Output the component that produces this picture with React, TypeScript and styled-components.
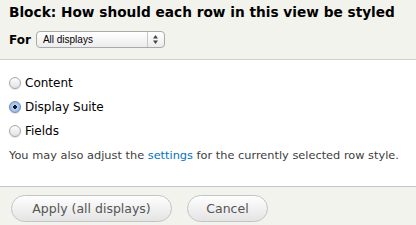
import styled, { createGlobalStyle } from "styled-components";

const Global = createGlobalStyle`
    html, body {
        margin: 0;
        padding: 0;
        background: #ffffff;
    }
    body {
        font-family: "DejaVu Sans", Verdana, sans-serif;
        color: #000;
    }
`;

const Dialog = styled.div`
    width: 416px;
    height: 225px;
    display: flex;
    flex-direction: column;
    overflow: hidden;
`;

const Header = styled.div`
    background: #f3f3ee;
    border-bottom: 1px solid #cfcfcf;
    padding: 4px 9px 0 9px;
    box-sizing: border-box;
    height: 60px;
`;

const Title = styled.h1`
    margin: 0;
    font-size: 13.7px;
    font-weight: bold;
    line-height: 17px;
`;

const ForRow = styled.div`
    display: flex;
    align-items: center;
    gap: 5px;
    margin-top: 10px;
`;

const ForLabel = styled.label`
    font-weight: bold;
    font-size: 12px;
`;

const Select = styled.div`
    width: 129px;
    height: 17px;
    box-sizing: border-box;
    border: 1px solid #a9a9a9;
    border-radius: 4px;
    background: linear-gradient(#ffffff, #ececec);
    display: flex;
    align-items: center;
    justify-content: space-between;
    padding: 0 6px 0 6px;
    font-family: "Liberation Sans", Arial, sans-serif;
    font-size: 10px;
`;

const Arrows = styled.span`
    display: flex;
    flex-direction: column;
    align-items: center;
    border-left: 1px solid #c8c8c8;
    padding-left: 5px;
    height: 100%;
    justify-content: center;
`;

const Body = styled.div`
    flex: 1;
    background: #fff;
    padding: 11px 9px 0 9px;
    border-bottom: 1px solid #c6c6c6;
`;

const RadioRow = styled.label`
    display: flex;
    align-items: center;
    gap: 4px;
    height: 24px;
    font-size: 12px;
`;

const RadioDot = styled.span<{ checked?: boolean }>`
    width: 12px;
    height: 12px;
    box-sizing: border-box;
    border-radius: 50%;
    border: 1px solid ${(p) => (p.checked ? "#6f8fbf" : "#a6a6a6")};
    background: ${(p) =>
        p.checked
            ? "radial-gradient(circle at 50% 50%, #1a1a1a 0 1.6px, #b9d3f2 2px, #7ea9de 100%)"
            : "linear-gradient(#fdfdfd, #e2e2e2)"};
    box-shadow: 0 1px 1px rgba(0, 0, 0, 0.12);
`;

const Help = styled.p`
    margin: 5px 0 0 0;
    font-size: 11.35px;
    color: #404040;
`;

const Link = styled.a`
    color: #0074bd;
    text-decoration: none;
`;

const Footer = styled.div`
    background: #f3f3ee;
    height: 38px;
    display: flex;
    align-items: flex-start;
    gap: 15px;
    padding: 8px 0 0 11px;
    box-sizing: border-box;
`;

const Button = styled.button<{ w: number }>`
    width: ${(p) => p.w}px;
    height: 27px;
    border: 1px solid #c4c4c4;
    border-radius: 14px;
    background: linear-gradient(#fefefe, #e4e4e4);
    color: #555;
    font-family: "DejaVu Sans", Verdana, sans-serif;
    font-size: 12.5px;
    padding: 0;
`;

function Radio({ label, checked }: { label: string; checked?: boolean }) {
    return (
        <RadioRow>
            <RadioDot checked={checked} />
            {label}
        </RadioRow>
    );
}

export default function App() {
    return (
        <Dialog>
            <Global />
            <Header>
                <Title>Block: How should each row in this view be styled</Title>
                <ForRow>
                    <ForLabel>For</ForLabel>
                    <Select>
                        All displays
                        <Arrows>
                            <svg width="5" height="9" viewBox="0 0 5 9">
                                <path d="M0 3.5 L2.5 0 L5 3.5 Z M0 5.5 L2.5 9 L5 5.5 Z" fill="#444" />
                            </svg>
                        </Arrows>
                    </Select>
                </ForRow>
            </Header>
            <Body>
                <Radio label="Content" />
                <Radio label="Display Suite" checked />
                <Radio label="Fields" />
                <Help>
                    You may also adjust the <Link href="#">settings</Link> for the currently selected row style.
                </Help>
            </Body>
            <Footer>
                <Button w={161}>Apply (all displays)</Button>
                <Button w={81}>Cancel</Button>
            </Footer>
        </Dialog>
    );
}
